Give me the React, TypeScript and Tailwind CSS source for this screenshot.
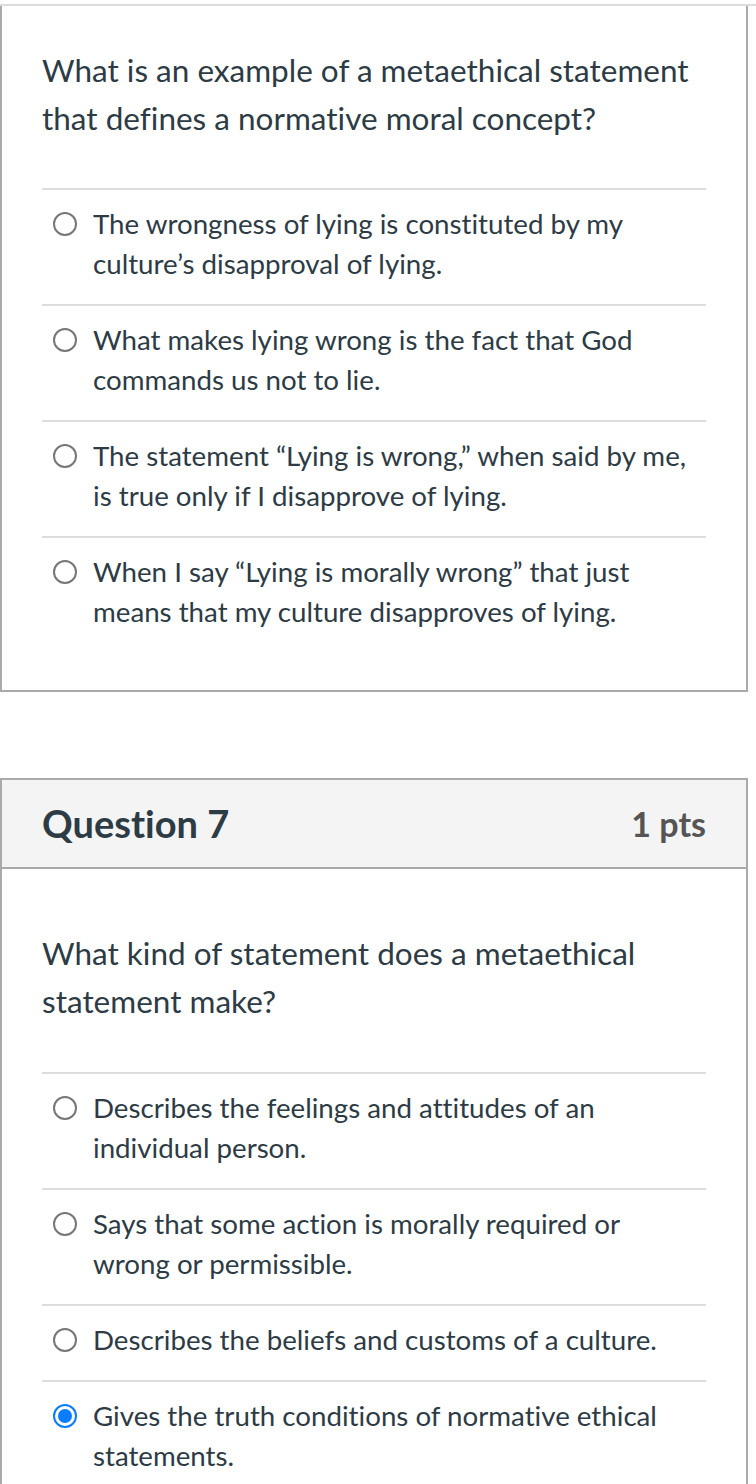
import React from "react";

type Ans = { text: string; checked?: boolean };

function Radio({ checked }: { checked?: boolean }) {
  if (checked) {
    return (
      <span className="mt-[8px] flex h-[24px] w-[24px] shrink-0 items-center justify-center rounded-full border-[2.5px] border-[#0a7cff] bg-white">
        <span className="h-[14px] w-[14px] rounded-full bg-[#0a7cff]" />
      </span>
    );
  }
  return <span className="mt-[8px] h-[24px] w-[24px] shrink-0 rounded-full border-2 border-[#777777] bg-white" />;
}

function Answers({ items }: { items: Ans[] }) {
  return (
    <div className="flex flex-col">
      {items.map((a, i) => (
        <div key={i} className="flex gap-[16px] border-t-2 border-[#dddddd] pl-[11px] pr-[14px] pt-[14px] pb-[20px]">
          <Radio checked={a.checked} />
          <p className="text-[27.7px] leading-[40px] text-[#2d3b45]">{a.text}</p>
        </div>
      ))}
    </div>
  );
}

export default function App() {
  const q1: Ans[] = [
    { text: "The wrongness of lying is constituted by my culture\u2019s disapproval of lying." },
    { text: "What makes lying wrong is the fact that God commands us not to lie." },
    { text: "The statement \u201cLying is wrong,\u201d when said by me, is true only if I disapprove of lying." },
    { text: "When I say \u201cLying is morally wrong\u201d that just means that my culture disapproves of lying." },
  ];
  const q2: Ans[] = [
    { text: "Describes the feelings and attitudes of an individual person." },
    { text: "Says that some action is morally required or wrong or permissible." },
    { text: "Describes the beliefs and customs of a culture." },
    { text: "Gives the truth conditions of normative ethical statements.", checked: true },
  ];
  return (
    <div className="min-h-[1484px] w-[756px] overflow-hidden bg-white pt-[4px] font-['Lato','Liberation_Sans',sans-serif] [font-variant-ligatures:none]">
      <div className="h-[2px] w-full bg-[#dcdcdc]" />
      <div className="w-[748px] border-x-2 border-b-2 border-[#aaaaaa] px-[40px] pt-[40px] pb-[38px]">
        <p className="mb-[46px] text-[31.5px] leading-[48px] text-[#2d3b45]">
          What is an example of a metaethical statement that defines a normative moral concept?
        </p>
        <Answers items={q1} />
      </div>
      <div className="mt-[86px] w-[748px] border-2 border-b-0 border-[#aaaaaa]">
        <div className="flex h-[89px] items-center justify-between border-b-2 border-[#aaaaaa] bg-[#f4f4f4] px-[40px]">
          <span className="text-[38px] font-bold text-[#2d3b45]">Question 7</span>
          <span className="text-[34px] font-bold text-[#555555]">1 pts</span>
        </div>
        <div className="px-[40px] pt-[60px] pb-[40px]">
          <p className="mb-[47px] text-[31.5px] leading-[48px] text-[#2d3b45]">
            What kind of statement does a metaethical statement make?
          </p>
          <Answers items={q2} />
        </div>
      </div>
    </div>
  );
}
